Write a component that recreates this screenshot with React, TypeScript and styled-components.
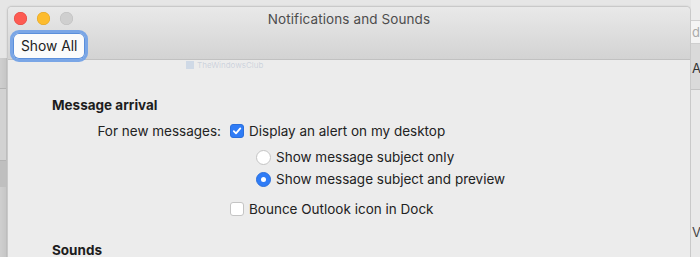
import { FunctionComponent } from 'react';
import { createGlobalStyle, styled } from 'styled-components';

const GlobalStyle = createGlobalStyle`
  html, body {
    margin: 0;
    padding: 0;
    overflow: hidden;
  }
  body {
    font-family: Inter, "Helvetica Neue", "Liberation Sans", sans-serif;
    background: #e6e6e6;
    -webkit-font-smoothing: antialiased;
  }
`;

const Checkbox: FunctionComponent<{ checked?: boolean }> = ({ checked }) => (
  <CheckBox $checked={checked}>
    {checked && (
      <svg width="10" height="10" viewBox="0 0 10 10">
        <path
          d="M1.8 5.2 L4 7.4 L8.3 2.4"
          fill="none"
          stroke="#fff"
          strokeWidth="1.8"
          strokeLinecap="round"
          strokeLinejoin="round"
        />
      </svg>
    )}
  </CheckBox>
);

const Radio: FunctionComponent<{ checked?: boolean }> = ({ checked }) => (
  <RadioDot $checked={checked}>{checked && <RadioInner />}</RadioDot>
);

const App: FunctionComponent = () => {
  return (
    <>
      <GlobalStyle />
      <Desktop>
        <LeftStrip>
          <StripBand $top={88} $height={72} />
          <StripBand $top={160} $height={26} $dark />
        </LeftStrip>
        <Window>
          <TitleBar>
            <Lights>
              <Light $color="#fd5b52" $border="#e0443e" />
              <Light $color="#fdbc2e" $border="#dea123" />
              <Light $color="#cfcfcf" $border="#bcbcbc" />
            </Lights>
            <Title>Notifications and Sounds</Title>
            <ToolbarButton>Show All</ToolbarButton>
          </TitleBar>
          <Content>
            <Watermark>
              <WatermarkIcon />
              TheWindowsClub
            </Watermark>
            <SectionTitle>Message arrival</SectionTitle>
            <FormRow>
              <RowLabel>For new messages:</RowLabel>
              <Option>
                <Checkbox checked />
                Display an alert on my desktop
              </Option>
            </FormRow>
            <RadioGroup>
              <Option>
                <Radio />
                Show message subject only
              </Option>
              <Option>
                <Radio checked />
                Show message subject and preview
              </Option>
            </RadioGroup>
            <FormRow $top={8}>
              <RowLabel />
              <Option>
                <Checkbox />
                Bounce Outlook icon in Dock
              </Option>
            </FormRow>
            <SectionTitle $top={22}>Sounds</SectionTitle>
          </Content>
        </Window>
        <RightStrip>
          <BackTop />
          <BackRow $height={22}>d</BackRow>
          <BackHead>A</BackHead>
          <BackBody>V</BackBody>
        </RightStrip>
      </Desktop>
    </>
  );
};

const Desktop = styled.div`
  display: grid;
  grid-template-columns: 7px 1fr 9px;
  width: 700px;
  height: 257px;
  overflow: hidden;
`;

const LeftStrip = styled.div`
  position: relative;
  margin-top: 58px;
  background: linear-gradient(90deg, #cfcfcf, #c6c6c6);
  border-right: 1px solid #bdbdbd;
`;

const StripBand = styled.div<{ $top: number; $height: number; $dark?: boolean }>`
  position: absolute;
  left: 0;
  right: 0;
  top: ${(p) => p.$top - 58}px;
  height: ${(p) => p.$height}px;
  background: ${(p) => (p.$dark ? '#bfbfbf' : '#d2d2d2')};
  border-top: 1px solid #b3b3b3;
`;

const Window = styled.div`
  margin-top: 6px;
  display: flex;
  flex-direction: column;
  border: 1px solid #c9c9c9;
  border-bottom: none;
  border-radius: 5px 5px 0 0;
  overflow: hidden;
  background: #ececec;
  box-shadow: 0 0 2px rgba(0, 0, 0, 0.12);
`;

const TitleBar = styled.div`
  position: relative;
  height: 58px;
  box-sizing: border-box;
  padding: 5px 0 0 5px;
  background: linear-gradient(180deg, #e9e9e9 0%, #dedede 50%, #d3d3d3 100%);
  border-bottom: 1px solid #c1c1c1;
`;

const Lights = styled.div`
  display: flex;
  gap: 10px;
  padding-left: 1px;
`;

const Light = styled.span<{ $color: string; $border: string }>`
  width: 13px;
  height: 13px;
  border-radius: 50%;
  background: ${(p) => p.$color};
  box-shadow: inset 0 0 0 0.5px ${(p) => p.$border};
`;

const Title = styled.div`
  position: absolute;
  top: 4px;
  left: 0;
  right: 0;
  text-align: center;
  font-size: 13.5px;
  color: #4d4d4d;
  letter-spacing: 0.1px;
`;

const ToolbarButton = styled.button`
  margin-top: 8px;
  height: 26px;
  padding: 0 8px;
  font-family: inherit;
  font-size: 13.8px;
  color: #222;
  background: #fbfbfb;
  border: none;
  border-radius: 6px;
  box-shadow: 0 0 0 3px #7aa6e6, 0 0 0 1px #5b8fdb inset;
`;

const Watermark = styled.div`
  position: absolute;
  left: 178px;
  top: 0px;
  display: flex;
  align-items: center;
  gap: 3px;
  font-size: 8px;
  color: rgba(140, 160, 190, 0.35);
`;

const WatermarkIcon = styled.span`
  width: 8px;
  height: 8px;
  background: rgba(120, 160, 210, 0.25);
`;

const Content = styled.div`
  position: relative;
  flex: 1;
  padding: 37px 0 0 44px;
  color: #222;
  font-size: 13px;
`;

const SectionTitle = styled.div<{ $top?: number }>`
  margin-top: ${(p) => p.$top ?? 0}px;
  font-weight: 700;
  font-size: 13.5px;
  color: #1d1d1d;
`;

const FormRow = styled.div<{ $top?: number }>`
  display: flex;
  align-items: center;
  gap: 9px;
  margin-top: ${(p) => p.$top ?? 7}px;
`;

const RowLabel = styled.div`
  width: 169px;
  text-align: right;
  font-size: 13.5px;
`;

const Option = styled.label`
  display: flex;
  align-items: center;
  gap: 5px;
  height: 22px;
  font-size: 13.5px;
  color: #222;
`;

const RadioGroup = styled.div`
  display: flex;
  flex-direction: column;
  padding-left: 204px;
  margin-top: 4px;
`;

const CheckBox = styled.span<{ $checked?: boolean }>`
  display: inline-flex;
  align-items: center;
  justify-content: center;
  width: 14px;
  height: 14px;
  box-sizing: border-box;
  border-radius: 3px;
  background: ${(p) => (p.$checked ? '#2f7cf6' : '#fff')};
  border: 1px solid ${(p) => (p.$checked ? '#2a6fdc' : '#c4c4c4')};
`;

const RadioDot = styled.span<{ $checked?: boolean }>`
  display: inline-flex;
  align-items: center;
  justify-content: center;
  width: 15px;
  height: 15px;
  box-sizing: border-box;
  border-radius: 50%;
  background: ${(p) => (p.$checked ? '#2f7cf6' : '#fff')};
  border: 1px solid ${(p) => (p.$checked ? '#2a6fdc' : '#c4c4c4')};
`;

const RadioInner = styled.span`
  width: 5px;
  height: 5px;
  border-radius: 50%;
  background: #fff;
`;

const RightStrip = styled.div`
  display: flex;
  flex-direction: column;
  font-size: 13px;
  color: #555;
  background: #d4d4d4;
  overflow: hidden;
`;

const BackTop = styled.div`
  height: 20px;
  background: #ececec;
  border-bottom: 1px solid #d0d0d0;
`;

const BackRow = styled.div<{ $height: number }>`
  height: ${(p) => p.$height}px;
  line-height: ${(p) => p.$height}px;
  padding-left: 1px;
  background: #f4f4f4;
  color: #aaa;
  border-bottom: 1px solid #cfcfcf;
`;

const BackHead = styled.div`
  height: 46px;
  padding: 16px 0 0 1px;
  box-sizing: border-box;
  background: #dadada;
  color: #333;
  border-bottom: 1px solid #c4c4c4;
`;

const BackBody = styled.div`
  flex: 1;
  padding: 134px 0 0 1px;
  background: #e9e9e9;
  color: #444;
`;

export default App;
